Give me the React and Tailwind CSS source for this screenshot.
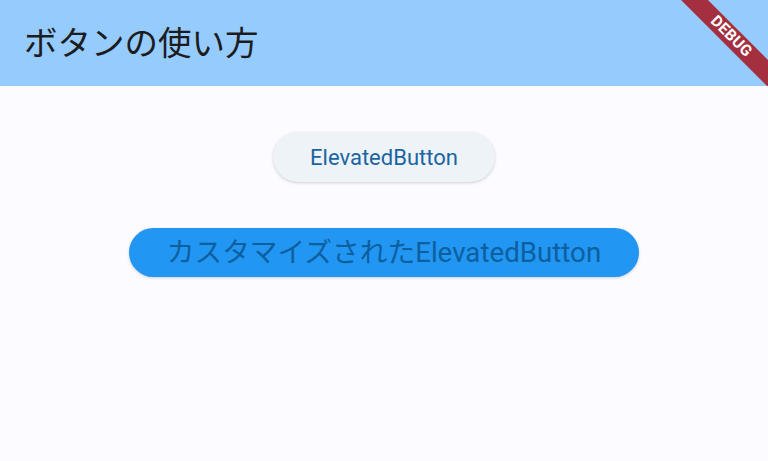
export default function App() {
  return (
    <div
      className="relative w-[768px] h-[461px] overflow-hidden bg-[#fcfbff]"
      style={{ fontFamily: "Roboto, 'Noto Sans CJK JP', sans-serif" }}
    >
      {/* App bar */}
      <header className="h-[86px] bg-[#95cbfd] flex items-center pl-[24px] pt-[2px]">
        <h1 className="text-[33.5px] text-[#1c1c1e] font-normal leading-none">
          ボタンの使い方
        </h1>
      </header>

      {/* Body */}
      <main className="flex flex-col items-center pt-[46px]">
        <button className="w-[222px] h-[50px] rounded-full bg-[#eef3f8] text-[#1a64a0] text-[22px] shadow-[0_1px_3px_rgba(0,0,0,0.18)]">
          ElevatedButton
        </button>
        <button className="mt-[46px] w-[510px] h-[49px] rounded-full bg-[#2196f3] text-[#0e5f9e] text-[27.7px] shadow-[0_1px_3px_rgba(0,0,0,0.18)]">
          カスタマイズされたElevatedButton
        </button>
      </main>

      {/* Debug banner */}
      <div className="absolute top-0 right-0 w-[120px] h-[86px] overflow-hidden pointer-events-none">
        <div className="absolute left-[-17px] top-[27px] w-[200px] h-[19px] rotate-45 bg-[#a4303f] flex items-center justify-center">
          <span className="text-white text-[15.5px] font-bold leading-none tracking-[0.3px]">
            DEBUG
          </span>
        </div>
      </div>
    </div>
  );
}
